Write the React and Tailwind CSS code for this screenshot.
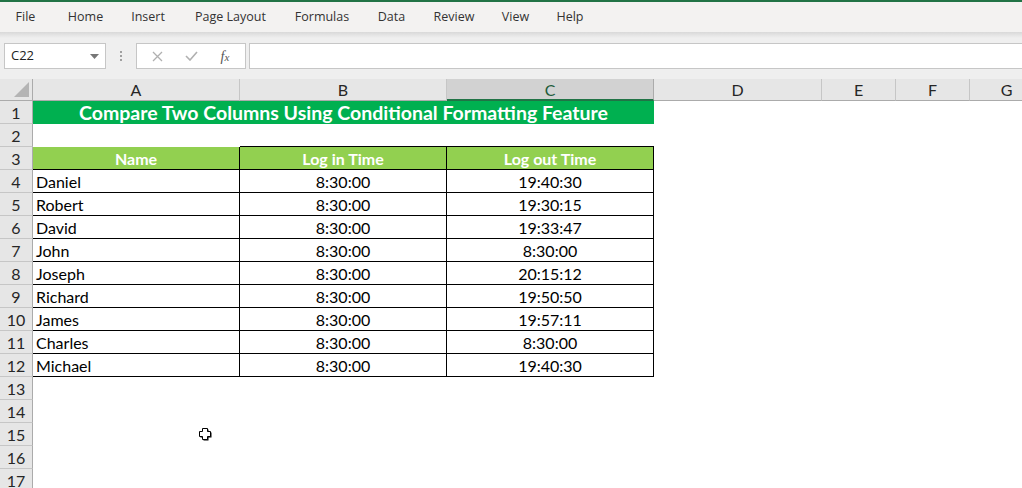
import React from "react";

const menu = [
  ["File", 51],
  ["Home", 69],
  ["Insert", 56],
  ["Page Layout", 109],
  ["Formulas", 74],
  ["Data", 65],
  ["Review", 60],
  ["View", 63],
  ["Help", 46],
];

const data = [
  ["Daniel", "8:30:00", "19:40:30"],
  ["Robert", "8:30:00", "19:30:15"],
  ["David", "8:30:00", "19:33:47"],
  ["John", "8:30:00", "8:30:00"],
  ["Joseph", "8:30:00", "20:15:12"],
  ["Richard", "8:30:00", "19:50:50"],
  ["James", "8:30:00", "19:57:11"],
  ["Charles", "8:30:00", "8:30:00"],
  ["Michael", "8:30:00", "19:40:30"],
];

const cellFont = { fontFamily: "Lato, 'Open Sans', sans-serif" };

function RowHead({ n }) {
  return (
    <div className="h-[23px] bg-[#e6e6e6] border-r border-b border-r-[#ababab] border-b-[#c6c6c6] flex items-center justify-center pt-[1px] text-[16px] text-[#262626]">
      {n}
    </div>
  );
}

function Empty({ count }) {
  return Array.from({ length: count }).map((_, i) => <div key={i} className="h-[23px]" />);
}

export default function App() {
  return (
    <div className="relative w-[1022px] h-[488px] overflow-hidden bg-white" style={cellFont}>
      {/* top green line */}
      <div className="h-[2px] bg-[#217346]" />
      {/* menu */}
      <div
        className="h-[30px] bg-[#f3f2f1] flex items-center text-[12.5px] text-[#333]"
        style={{ fontFamily: "'Open Sans', 'Noto Sans', sans-serif" }}
      >
        {menu.map(([label, w]) => (
          <div key={label} className="flex justify-center" style={{ width: w }}>
            {label}
          </div>
        ))}
      </div>
      <div className="h-[6px] bg-gradient-to-b from-[#d9d9d9] to-[#efefef]" />
      {/* formula bar */}
      <div className="bg-[#efefef] pt-[5px] pb-[10px] pl-[4px] flex items-center">
        <div
          className="w-[102px] h-[26px] bg-white border border-[#c6c6c6] flex items-center justify-between pl-[6px] pr-[6px] text-[13px] text-[#222]"
          style={{ fontFamily: "'Open Sans', 'Noto Sans', sans-serif" }}
        >
          <span>C22</span>
          <svg width="9" height="5" viewBox="0 0 9 5">
            <path d="M0 0 H9 L4.5 5 Z" fill="#777" />
          </svg>
        </div>
        <div className="w-[30px] flex flex-col items-center gap-[2px]">
          <div className="w-[2px] h-[2px] bg-[#a0a0a0]" />
          <div className="w-[2px] h-[2px] bg-[#a0a0a0]" />
          <div className="w-[2px] h-[2px] bg-[#a0a0a0]" />
        </div>
        <div className="w-[110px] h-[26px] bg-white border border-[#c6c6c6] flex items-center">
          <div className="w-[40px] flex justify-center">
            <svg width="11" height="11" viewBox="0 0 11 11">
              <path d="M1 1 L10 10 M10 1 L1 10" stroke="#b0b0b0" strokeWidth="1.3" />
            </svg>
          </div>
          <div className="w-[28px] flex justify-center">
            <svg width="13" height="10" viewBox="0 0 13 10">
              <path d="M1 5 L5 9 L12 1" stroke="#b0b0b0" strokeWidth="1.6" fill="none" />
            </svg>
          </div>
          <div
            className="w-[40px] flex justify-center text-[14px] italic text-[#555]"
            style={{ fontFamily: "'Liberation Serif', serif" }}
          >
            <span>f</span>
            <span className="text-[11px] mt-[3px]">x</span>
          </div>
        </div>
        <div className="ml-[3px] flex-1 h-[26px] bg-white border border-[#c6c6c6] border-r-0" />
      </div>

      {/* sheet */}
      <div className="grid w-[1044px] grid-cols-[33px_207px_207px_207px_168px_74px_74px_74px] text-[16px] text-black">
        {/* column headers */}
        <div className="h-[22px] bg-[#e6e6e6] border-r border-b border-[#ababab] relative">
          <svg className="absolute right-[3px] bottom-[3px]" width="15" height="15" viewBox="0 0 15 15">
            <path d="M15 0 V15 H0 Z" fill="#b4b4b4" />
          </svg>
        </div>
        {["A", "B", "C", "D", "E", "F", "G"].map((c) =>
          c === "C" ? (
            <div
              key={c}
              className="h-[22px] bg-[#d2d2d2] border-r border-r-[#ababab] border-b-2 border-b-[#217346] flex items-center justify-center pt-[1px] text-[#1e5c3a]"
            >
              {c}
            </div>
          ) : (
            <div
              key={c}
              className="h-[22px] bg-[#e6e6e6] border-r border-b border-r-[#c6c6c6] border-b-[#ababab] flex items-center justify-center pt-[1px] text-[#262626]"
            >
              {c}
            </div>
          )
        )}

        {/* row 1 */}
        <RowHead n={1} />
        <div className="col-span-3 h-[23px] bg-[#00b050] flex items-center justify-center text-white font-bold text-[19.5px]">
          Compare Two Columns Using Conditional Formatting Feature
        </div>
        <Empty count={4} />

        {/* row 2 */}
        <RowHead n={2} />
        <div className="h-[23px]" />
        <div className="h-[23px] border-b border-black" />
        <div className="h-[23px] border-b border-black" />
        <Empty count={4} />

        {/* row 3 */}
        <RowHead n={3} />
        {["Name", "Log in Time", "Log out Time"].map((h) => (
          <div
            key={h}
            className="h-[23px] bg-[#92d050] border-r border-b border-black flex items-center justify-center pt-[1px] text-white font-bold"
          >
            {h}
          </div>
        ))}
        <Empty count={4} />

        {data.map(([name, a, b], i) => (
          <React.Fragment key={name}>
            <RowHead n={i + 4} />
            <div className="h-[23px] border-r border-b border-black flex items-center pt-[1px] pl-[3px]">{name}</div>
            <div className="h-[23px] border-r border-b border-black flex items-center pt-[1px] justify-center">{a}</div>
            <div className="h-[23px] border-r border-b border-black flex items-center pt-[1px] justify-center">{b}</div>
            <Empty count={4} />
          </React.Fragment>
        ))}

        {[13, 14, 15, 16, 17].map((n) => (
          <React.Fragment key={n}>
            <RowHead n={n} />
            <Empty count={7} />
          </React.Fragment>
        ))}
      </div>

      {/* cursor */}
      <svg className="absolute left-[198px] top-[427px]" width="15" height="15" viewBox="0 0 15 15">
        <path d="M4.5 1.5 H9.5 V4.5 H12.5 V9.5 H9.5 V12.5 H4.5 V9.5 H1.5 V4.5 H4.5 Z" fill="#000" transform="translate(1 1)" />
        <path d="M4.5 1.5 H9.5 V4.5 H12.5 V9.5 H9.5 V12.5 H4.5 V9.5 H1.5 V4.5 H4.5 Z" fill="#fff" stroke="#000" strokeWidth="1" />
      </svg>
    </div>
  );
}
